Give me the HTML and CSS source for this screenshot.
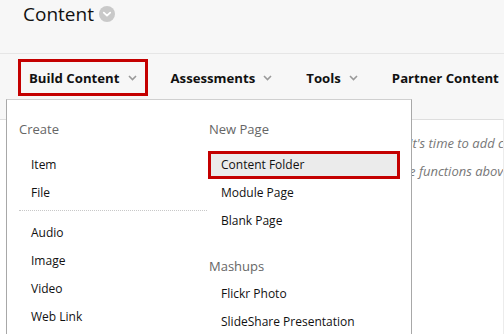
FILE: index.html
```html
<!DOCTYPE html>
<html>
<head>
<meta charset="utf-8">
<link rel="stylesheet" href="styles.css">
</head>
<body>
<div class="page">
  <header class="header">
    <h1 class="title">Content</h1>
    <span class="title-btn">
      <svg width="16" height="16" viewBox="0 0 16 16"><circle cx="8" cy="8" r="8" fill="#c9c9c9"/><path d="M4.8 6.6 L8 9.6 L11.2 6.6" fill="none" stroke="#fff" stroke-width="1.8" stroke-linecap="round" stroke-linejoin="round"/></svg>
    </span>
  </header>
  <nav class="nav">
    <div class="nav-item active">Build Content <svg class="chev" width="9" height="6" viewBox="0 0 9 6"><path d="M1 1 L4.5 4.5 L8 1" fill="none" stroke="#9a9a9a" stroke-width="1.6"/></svg></div>
    <div class="nav-item">Assessments <svg class="chev" width="9" height="6" viewBox="0 0 9 6"><path d="M1 1 L4.5 4.5 L8 1" fill="none" stroke="#9a9a9a" stroke-width="1.6"/></svg></div>
    <div class="nav-item">Tools <svg class="chev" width="9" height="6" viewBox="0 0 9 6"><path d="M1 1 L4.5 4.5 L8 1" fill="none" stroke="#9a9a9a" stroke-width="1.6"/></svg></div>
    <div class="nav-item">Partner Content</div>
  </nav>
  <main class="main">
    <div class="content-box">
      <p class="msg msg1">It's time to add content to your course.</p>
      <p class="msg msg2">Use the functions above to add content.</p>
    </div>
  </main>
  <div class="menu">
    <div class="col col1">
      <div class="heading">Create</div>
      <div class="item">Item</div>
      <div class="item">File</div>
      <div class="sep"></div>
      <div class="item">Audio</div>
      <div class="item">Image</div>
      <div class="item">Video</div>
      <div class="item">Web Link</div>
    </div>
    <div class="col col2">
      <div class="heading">New Page</div>
      <div class="item selected">Content Folder</div>
      <div class="item">Module Page</div>
      <div class="item">Blank Page</div>
      <div class="heading heading2">Mashups</div>
      <div class="item">Flickr Photo</div>
      <div class="item">SlideShare Presentation</div>
    </div>
  </div>
</div>
</body>
</html>
```
FILE: styles.css
```css
* { box-sizing: border-box; }
html, body { margin: 0; padding: 0; }
body {
  background: #f7f7f7;
  font-family: "Open Sans", "DejaVu Sans", sans-serif;
  color: #222;
}
.page {
  position: relative;
  width: 504px;
  height: 334px;
  overflow: hidden;
}
.header {
  height: 54px;
  border-bottom: 1px solid #e6e6e6;
  display: flex;
  align-items: flex-start;
  padding-left: 23px;
  gap: 5px;
}
.title {
  margin: 0;
  font-size: 19px;
  font-weight: 400;
  line-height: 28px;
  color: #111;
}
.title-btn {
  display: flex;
  margin-top: 6px;
}
.nav {
  height: 45px;
  display: flex;
  align-items: flex-start;
  padding-left: 18px;
  padding-top: 5px;
  overflow: hidden;
}
.nav-item {
  height: 37px;
  border: 3px solid transparent;
  padding: 0 8px;
  margin-right: 12px;
  display: flex;
  align-items: center;
  gap: 8px;
  font-size: 13.2px;
  font-weight: 700;
  color: #111;
  white-space: nowrap;
}
.nav-item.active { border-color: #c40000; }
.chev { margin-top: 1px; flex: none; }
.main {
  padding-top: 20px;
  height: 235px;
}
.content-box {
  background: #fff;
  border-top: 1px solid #dedede;
  border-right: 1px solid #ececec;
  height: 100%;
  padding-top: 9px;
  overflow: hidden;
}
.msg {
  margin: 0;
  line-height: 28px;
  font-size: 13px;
  font-style: italic;
  color: #777;
  white-space: nowrap;
}
.msg1 { padding-left: 409px; }
.msg2 { padding-left: 373px; }
.menu {
  position: absolute;
  left: 6px;
  top: 99px;
  width: 406px;
  height: 250px;
  background: #fff;
  border: 1px solid #a8a8a8;
  border-top-color: #d0d0d0;
  display: flex;
  padding-top: 19px;
}
.col1 {
  width: 201px;
  padding-left: 12px;
  padding-right: 1px;
}
.col2 {
  width: 192px;
}
.heading {
  font-size: 13px;
  line-height: 20px;
  color: #666;
  margin-bottom: 12px;
}
.col2 .heading { padding-left: 1px; }
.heading2 {
  margin-top: 21px;
  margin-bottom: 4px;
}
.item {
  font-size: 12px;
  line-height: 28px;
  height: 28px;
  color: #111;
  white-space: nowrap;
}
.col1 .item { padding-left: 12px; }
.col2 .item { padding-left: 13px; }
.col2 .item.selected {
  border: 3px solid #c40000;
  background: #ebebeb;
  padding-left: 10px;
  line-height: 22px;
}
.sep {
  border-top: 1px dotted #c8c8c8;
  margin: 3px 0 8px 0;
  width: 188px;
}
```
